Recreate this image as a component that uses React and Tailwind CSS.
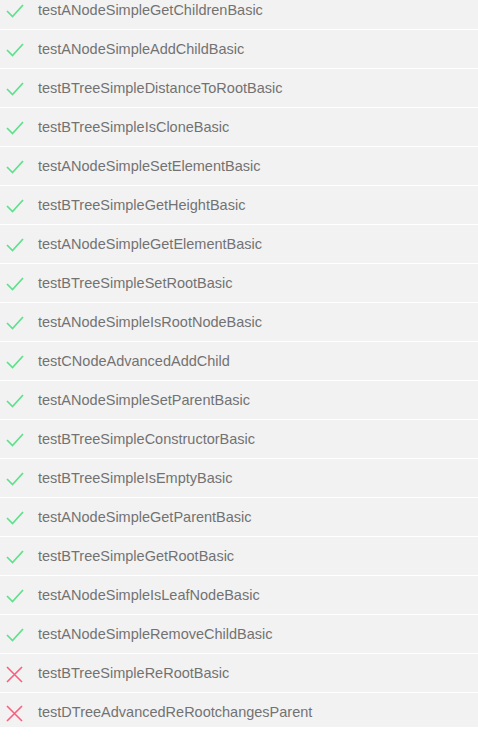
import React from "react";

const tests = [
  ["testANodeSimpleGetChildrenBasic", true],
  ["testANodeSimpleAddChildBasic", true],
  ["testBTreeSimpleDistanceToRootBasic", true],
  ["testBTreeSimpleIsCloneBasic", true],
  ["testANodeSimpleSetElementBasic", true],
  ["testBTreeSimpleGetHeightBasic", true],
  ["testANodeSimpleGetElementBasic", true],
  ["testBTreeSimpleSetRootBasic", true],
  ["testANodeSimpleIsRootNodeBasic", true],
  ["testCNodeAdvancedAddChild", true],
  ["testANodeSimpleSetParentBasic", true],
  ["testBTreeSimpleConstructorBasic", true],
  ["testBTreeSimpleIsEmptyBasic", true],
  ["testANodeSimpleGetParentBasic", true],
  ["testBTreeSimpleGetRootBasic", true],
  ["testANodeSimpleIsLeafNodeBasic", true],
  ["testANodeSimpleRemoveChildBasic", true],
  ["testBTreeSimpleReRootBasic", false],
  ["testDTreeAdvancedReRootchangesParent", false],
];

function Check() {
  return (
    <svg width="18" height="14" viewBox="0 0 18 14" fill="none">
      <path d="M1 7 L6.5 12.5 L17 1" stroke="#5fe08c" strokeWidth="1.7" />
    </svg>
  );
}

function Cross() {
  return (
    <svg width="17" height="17" viewBox="0 0 17 17" fill="none">
      <path d="M1 1 L16 16 M16 1 L1 16" stroke="#f7607e" strokeWidth="1.6" />
    </svg>
  );
}

export default function App() {
  return (
    <div className="w-[478px] h-[740px] bg-white overflow-hidden">
      <div className="h-[727px] overflow-hidden">
        <div className="-mt-[9px] flex flex-col gap-px bg-white">
          {tests.map(([name, ok]) => (
            <div
              key={name}
              className="h-[38px] bg-[#f2f2f2] flex items-center pl-[6px] pt-[2px]"
              style={{ fontFamily: '"Liberation Sans", Arial, sans-serif' }}
            >
              <div className="w-[32px] flex items-center">
                {ok ? <Check /> : <Cross />}
              </div>
              <span className="text-[14.5px] text-[#727272]">{name}</span>
            </div>
          ))}
        </div>
      </div>
    </div>
  );
}
